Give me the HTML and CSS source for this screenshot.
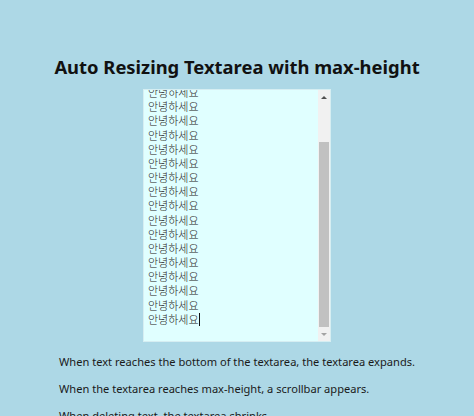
FILE: index.html
```html
<!DOCTYPE html>
<html lang="ko">
<head>
<meta charset="utf-8">
<link rel="stylesheet" href="styles.css">
</head>
<body>
<main class="page">
  <h1 class="title">Auto Resizing Textarea with max-height</h1>
  <div class="textarea">
    <div class="text">
      <div class="line">안녕하세요</div>
      <div class="line">안녕하세요</div>
      <div class="line">안녕하세요</div>
      <div class="line">안녕하세요</div>
      <div class="line">안녕하세요</div>
      <div class="line">안녕하세요</div>
      <div class="line">안녕하세요</div>
      <div class="line">안녕하세요</div>
      <div class="line">안녕하세요</div>
      <div class="line">안녕하세요</div>
      <div class="line">안녕하세요</div>
      <div class="line">안녕하세요</div>
      <div class="line">안녕하세요</div>
      <div class="line">안녕하세요</div>
      <div class="line">안녕하세요</div>
      <div class="line">안녕하세요</div>
      <div class="line">안녕하세요<span class="caret"></span></div>
    </div>
    <div class="scrollbar">
      <div class="sb-btn"><span class="arrow-up"></span></div>
      <div class="sb-track"><div class="sb-thumb"></div></div>
      <div class="sb-btn"><span class="arrow-down"></span></div>
    </div>
  </div>
  <p class="note">When text reaches the bottom of the textarea, the textarea expands.</p>
  <p class="note">When the textarea reaches max-height, a scrollbar appears.</p>
  <p class="note">When deleting text, the textarea shrinks.</p>
</main>
</body>
</html>
```

FILE: styles.css
```css
html, body {
  margin: 0;
  padding: 0;
  background: #add8e6;
  height: 416px;
  overflow: hidden;
}
.page {
  padding: 55px 40px 0 40px;
  font-family: "Noto Sans", "Noto Sans CJK KR", sans-serif;
  color: #1a1a1a;
}
.title {
  margin: 0 0 10px 0;
  font-size: 18.4px;
  line-height: 24px;
  font-weight: 700;
  text-align: center;
  color: #111;
  white-space: nowrap;
}
.textarea {
  width: 188px;
  height: 253px;
  margin: 0 auto;
  box-sizing: border-box;
  background: #e0ffff;
  border: 1px solid #d6eef2;
  display: flex;
}
.text {
  flex: 1;
  overflow: hidden;
  display: flex;
  flex-direction: column;
  justify-content: flex-end;
  padding: 0 4px 15px 4px;
  font-family: "Noto Sans CJK KR", sans-serif;
  font-size: 11px;
  line-height: 14.17px;
  font-weight: 300;
  color: #222;
}
.line {
  white-space: nowrap;
  flex: none;
}
.caret {
  display: inline-block;
  width: 1px;
  height: 13px;
  background: #111;
  vertical-align: -2px;
}
.scrollbar {
  width: 12px;
  display: flex;
  flex-direction: column;
  background: #f1f1f1;
}
.sb-btn {
  height: 14px;
  flex: none;
  display: flex;
  align-items: center;
  justify-content: center;
}
.sb-track {
  flex: 1;
  display: flex;
  flex-direction: column;
  justify-content: flex-end;
  padding: 0 1px;
}
.sb-thumb {
  height: 185px;
  background: #c1c1c1;
}
.arrow-up {
  width: 0;
  height: 0;
  border-left: 3px solid transparent;
  border-right: 3px solid transparent;
  border-bottom: 3px solid #505050;
}
.arrow-down {
  width: 0;
  height: 0;
  border-left: 3px solid transparent;
  border-right: 3px solid transparent;
  border-top: 3px solid #a3a3a3;
}
.note {
  margin: 12px 0 0 19px;
  font-size: 11.1px;
  line-height: 16px;
  color: #1a1a1a;
  white-space: nowrap;
}
.note + .note {
  margin-top: 11px;
}
```
